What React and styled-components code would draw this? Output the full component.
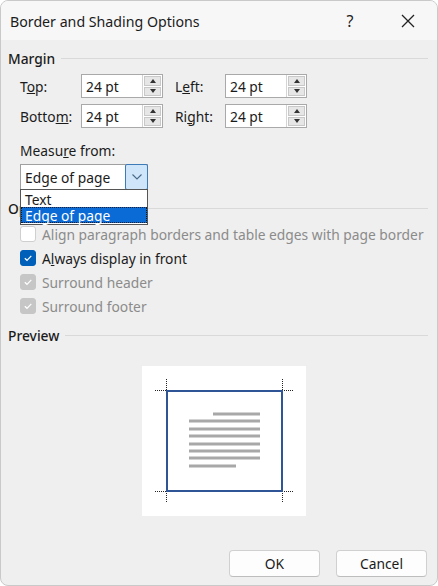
import React from "react";
import styled, { createGlobalStyle } from "styled-components";

const Global = createGlobalStyle`
  html, body { margin: 0; padding: 0; background: #ffffff; }
  body { font-family: "Noto Sans", "Open Sans", sans-serif; }
  * { box-sizing: border-box; }
`;

const Window = styled.div`
  width: 438px;
  height: 586px;
  border: 1px solid #c9c9c9;
  border-radius: 8px;
  overflow: hidden;
  background: #efefef;
  display: flex;
  flex-direction: column;
  color: #1b1b1b;
  font-size: 13.8px;
`;

const TitleBar = styled.div`
  height: 39px;
  flex: none;
  background: #f7f7f8;
  display: flex;
  align-items: center;
  padding-left: 9px;
`;

const Title = styled.div`
  font-size: 14.2px;
  flex: 1;
  padding-top: 2px;
`;

const TitleButton = styled.div`
  width: 58px;
  height: 39px;
  display: flex;
  align-items: center;
  justify-content: center;
  font-size: 16px;
  color: #222;
`;

const Body = styled.div`
  flex: 1;
  display: flex;
  flex-direction: column;
  padding: 9px 9px 8px 7px;
`;

const SectionHeader = styled.div`
  display: flex;
  align-items: center;
  height: 18px;
  gap: 6px;
  margin-top: ${(p) => p.$mt || 0}px;
  font-weight: 500;
  &::after {
    content: "";
    flex: 1;
    height: 1px;
    background: #d9d9d9;
    margin-top: 1px;
  }
`;

const Indent = styled.div`
  padding-left: 12px;
  margin-top: ${(p) => p.$mt || 0}px;
`;

const MarginGrid = styled.div`
  display: grid;
  grid-template-columns: 61px 82px 62px 82px;
  grid-auto-rows: 24px;
  row-gap: 6px;
  align-items: center;
`;

const Label = styled.div`
  white-space: nowrap;
  padding-left: ${(p) => p.$pl || 0}px;
`;

const SpinBox = styled.div`
  display: flex;
  height: 24px;
  border: 1px solid #a9a9a9;
  background: #fff;
`;

const SpinValue = styled.div`
  flex: 1;
  padding-left: 4px;
  display: flex;
  align-items: center;
`;

const SpinButtons = styled.div`
  width: 20px;
  display: flex;
  flex-direction: column;
  border-left: 1px solid #d4d4d4;
  padding: 1px;
  gap: 1px;
`;

const SpinBtn = styled.div`
  flex: 1;
  background: #e6e6e6;
  border: 1px solid #c8c8c8;
  display: flex;
  align-items: center;
  justify-content: center;
`;

const Arrow = styled.div`
  width: 0;
  height: 0;
  border-left: 3px solid transparent;
  border-right: 3px solid transparent;
  ${(p) =>
    p.$up ? "border-bottom: 4px solid #333;" : "border-top: 4px solid #333;"}
`;

const Combo = styled.div`
  position: relative;
  width: 128px;
  height: 26px;
  margin-top: 4px;
  display: flex;
  border: 1px solid #a0a0a0;
  background: #fff;
`;

const ComboText = styled.div`
  flex: 1;
  display: flex;
  align-items: center;
  padding-left: 4px;
`;

const ComboButton = styled.div`
  width: 23px;
  margin: -1px -1px -1px 0;
  background: #cfe5f9;
  border: 1px solid #3d7ab8;
  border-radius: 2px;
  display: flex;
  align-items: center;
  justify-content: center;
`;

const DropList = styled.div`
  position: absolute;
  top: 24px;
  left: -1px;
  width: 128px;
  border: 1px solid #555;
  background: #fff;
  z-index: 5;
  padding: 1px 0;
`;

const DropItem = styled.div`
  height: 16px;
  line-height: 15px;
  padding-left: 3px;
  background: ${(p) => (p.$sel ? "#0a6ad6" : "#fff")};
  color: ${(p) => (p.$sel ? "#fff" : "#1b1b1b")};
  border: 1px ${(p) => (p.$sel ? "dotted #0d1b2a" : "solid transparent")};
`;

const CheckList = styled.div`
  display: flex;
  flex-direction: column;
  margin-top: 5px;
`;

const CheckRow = styled.div`
  display: flex;
  align-items: center;
  gap: 6px;
  height: 24px;
  padding-left: 12px;
  color: ${(p) => (p.$disabled ? "#8b8b8b" : "#1b1b1b")};
  white-space: nowrap;
`;

const Box = styled.div`
  width: 16px;
  height: 16px;
  border-radius: 3px;
  flex: none;
  display: flex;
  align-items: center;
  justify-content: center;
  background: ${(p) =>
    p.$checked ? (p.$disabled ? "#c6c6c6" : "#005fb8") : "#ffffff"};
  border: 1px solid
    ${(p) => (p.$checked ? (p.$disabled ? "#c6c6c6" : "#005fb8") : "#cfcfcf")};
`;

const PreviewWrap = styled.div`
  display: flex;
  justify-content: center;
  margin-top: 22px;
  padding-left: 11px;
`;

const PreviewBox = styled.div`
  width: 164px;
  height: 150px;
  background: #fff;
`;

const Footer = styled.div`
  margin-top: auto;
  display: flex;
  justify-content: flex-end;
  gap: 16px;
  padding-right: 1px;
`;

const Button = styled.div`
  width: 91px;
  height: 27px;
  background: #fdfdfd;
  border: 1px solid #d0d0d0;
  border-bottom-color: #bdbdbd;
  border-radius: 4px;
  display: flex;
  align-items: center;
  justify-content: center;
`;

const Check = ({ color = "#fff" }) => (
  <svg width="10" height="10" viewBox="0 0 10 10">
    <path d="M1.8 5.2 L4 7.3 L8.3 2.8" fill="none" stroke={color} strokeWidth="1.2" />
  </svg>
);

const Spin = ({ value }) => (
  <SpinBox>
    <SpinValue>{value}</SpinValue>
    <SpinButtons>
      <SpinBtn><Arrow $up /></SpinBtn>
      <SpinBtn><Arrow /></SpinBtn>
    </SpinButtons>
  </SpinBox>
);

const Preview = () => {
  const lines = [
    [71, 118, 48],
    [47, 118, 55],
    [47, 118, 63],
    [47, 118, 70],
    [47, 118, 78],
    [47, 118, 85],
    [47, 118, 92],
    [47, 94, 100],
  ];
  const corner = (x, y, dx, dy) => (
    <g stroke="#222" strokeWidth="1" strokeDasharray="1 1" fill="none">
      <path d={`M${x + 0.5} ${y} v${dy * 11}`} />
      <path d={`M${x} ${y + 0.5} h${dx * 11}`} />
    </g>
  );
  return (
    <svg width="164" height="150" viewBox="0 0 164 150">
      {corner(24, 24, -1, -1)}
      {corner(140, 24, 1, -1)}
      {corner(24, 125, -1, 1)}
      {corner(140, 125, 1, 1)}
      <rect x="25" y="25" width="115" height="100" fill="#fff" stroke="#2f5597" strokeWidth="2" />
      {lines.map(([a, b, y], i) => (
        <rect key={i} x={a} y={y - 1.5} width={b - a} height="3" fill="#a8a8a8" />
      ))}
    </svg>
  );
};

export default function App() {
  return (
    <>
      <Global />
      <Window>
        <TitleBar>
          <Title>Border and Shading Options</Title>
          <TitleButton>?</TitleButton>
          <TitleButton>
            <svg width="14" height="14" viewBox="0 0 14 14">
              <path d="M1 1 L13 13 M13 1 L1 13" stroke="#222" strokeWidth="1.3" />
            </svg>
          </TitleButton>
        </TitleBar>
        <Body>
          <SectionHeader>Margin</SectionHeader>
          <Indent $mt={7}>
            <MarginGrid>
              <Label>T<u>o</u>p:</Label>
              <Spin value="24 pt" />
              <Label $pl={12}>L<u>e</u>ft:</Label>
              <Spin value="24 pt" />
              <Label>Botto<u>m</u>:</Label>
              <Spin value="24 pt" />
              <Label $pl={12}>Ri<u>g</u>ht:</Label>
              <Spin value="24 pt" />
            </MarginGrid>
          </Indent>
          <Indent $mt={13}>
            <Label>Measu<u>r</u>e from:</Label>
            <Combo>
              <ComboText>Edge of page</ComboText>
              <ComboButton>
                <svg width="12" height="8" viewBox="0 0 12 8">
                  <path d="M1.5 1.5 L6 6 L10.5 1.5" fill="none" stroke="#4a6a8a" strokeWidth="1.1" />
                </svg>
              </ComboButton>
              <DropList>
                <DropItem>Text</DropItem>
                <DropItem $sel>Edge of page</DropItem>
              </DropList>
            </Combo>
          </Indent>
          <SectionHeader $mt={9}>Options</SectionHeader>
          <CheckList>
            <CheckRow $disabled>
              <Box $disabled />
              <span>Align paragraph borders and table edges with page border</span>
            </CheckRow>
            <CheckRow>
              <Box $checked><Check /></Box>
              <span>A<u>l</u>ways display in front</span>
            </CheckRow>
            <CheckRow $disabled>
              <Box $checked $disabled><Check /></Box>
              <span>Surround header</span>
            </CheckRow>
            <CheckRow $disabled>
              <Box $checked $disabled><Check /></Box>
              <span>Surround footer</span>
            </CheckRow>
          </CheckList>
          <SectionHeader $mt={8}>Preview</SectionHeader>
          <PreviewWrap>
            <PreviewBox>
              <Preview />
            </PreviewBox>
          </PreviewWrap>
          <Footer>
            <Button>OK</Button>
            <Button>Cancel</Button>
          </Footer>
        </Body>
      </Window>
    </>
  );
}
